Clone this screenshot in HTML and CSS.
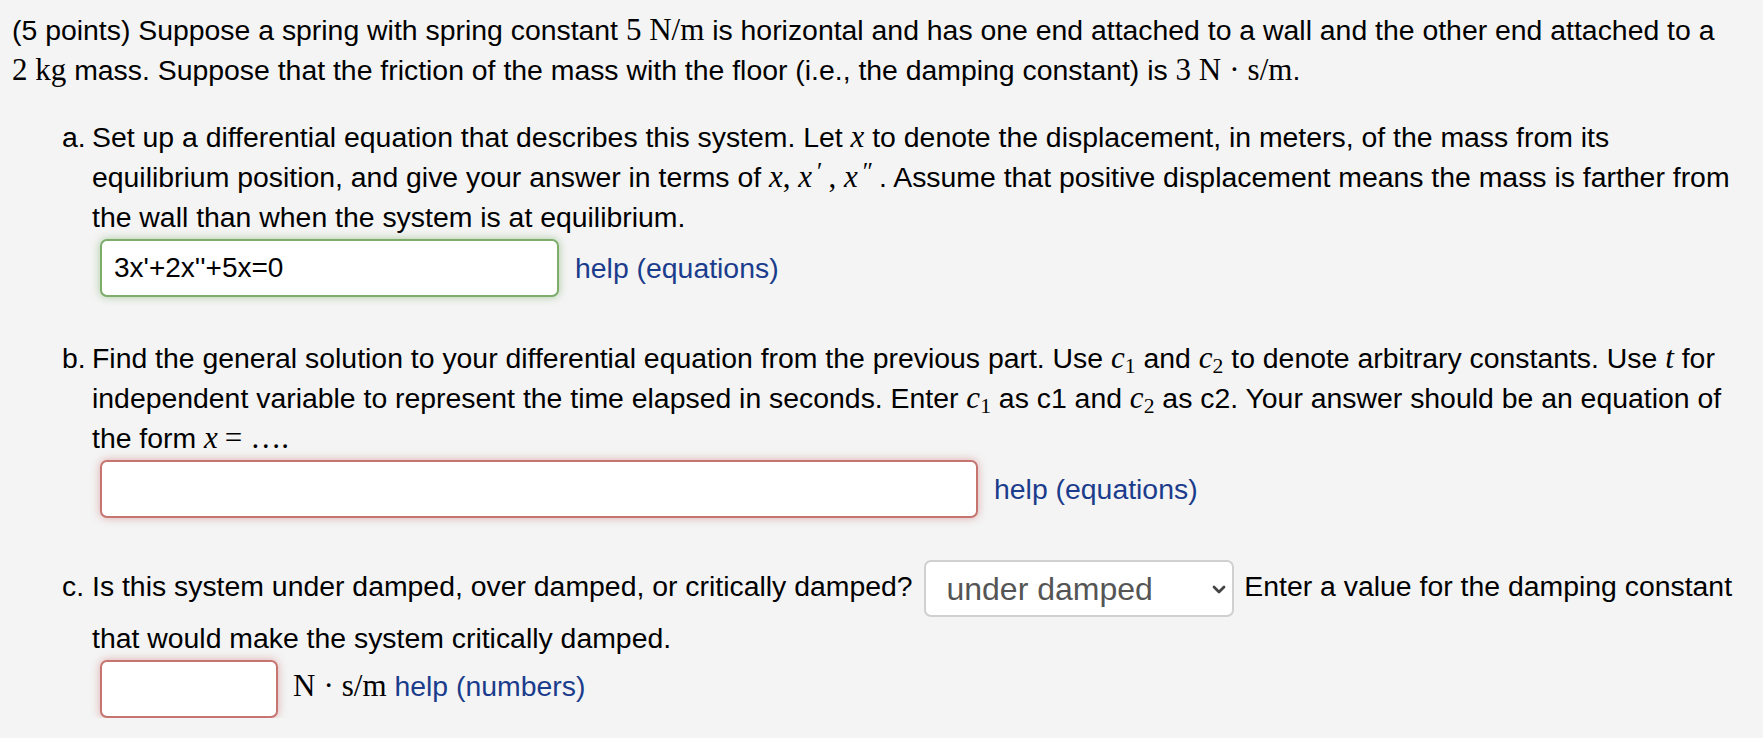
FILE: index.html
```html
<!DOCTYPE html>
<html>
<head>
<meta charset="utf-8">
<title>Spring problem</title>
<link rel="stylesheet" href="styles.css">
</head>
<body>
<div class="problem">
  <p class="intro">(5 points) Suppose a spring with spring constant <span class="m">5&nbsp;N/m</span> is horizontal and has one end attached to a wall and the other end attached to a <span class="m">2&nbsp;kg</span> mass. Suppose that the friction of the mass with the floor (i.e., the damping constant) is <span class="m">3&nbsp;N<span class="op">·</span>s/m</span>.</p>

  <div class="part part-first">
    <span class="label">a.</span>
    <div class="body">
      <p>Set up a differential equation that describes this system. Let <span class="m"><i>x</i></span> to denote the displacement, in meters, of the mass from its equilibrium position, and give your answer in terms of <span class="m"><i>x</i>, <i>x</i><span class="pr">′</span>, <i>x</i><span class="pr">″</span></span>. Assume that positive displacement means the mass is farther from the wall than when the system is at equilibrium.</p>
      <div class="answer">
        <input class="ans ok w-a" type="text" value="3x'+2x''+5x=0">
        <a class="help" href="#">help (equations)</a>
      </div>
    </div>
  </div>

  <div class="part">
    <span class="label">b.</span>
    <div class="body">
      <p>Find the general solution to your differential equation from the previous part. Use <span class="m"><i>c</i><sub>1</sub></span> and <span class="m"><i>c</i><sub>2</sub></span> to denote arbitrary constants. Use <span class="m"><i>t</i></span> for independent variable to represent the time elapsed in seconds. Enter <span class="m"><i>c</i><sub>1</sub></span> as c1 and <span class="m"><i>c</i><sub>2</sub></span> as c2. Your answer should be an equation of the form <span class="m"><i>x</i><span class="eq">=</span>….</span></p>
      <div class="answer">
        <input class="ans bad w-b" type="text" value="">
        <a class="help" href="#">help (equations)</a>
      </div>
    </div>
  </div>

  <div class="part">
    <span class="label">c.</span>
    <div class="body">
      <p>Is this system under damped, over damped, or critically damped? <span class="sel-wrap"><select class="sel"><option>under damped</option><option>over damped</option><option>critically damped</option></select><svg class="chev" viewBox="0 0 14 9" aria-hidden="true"><path d="M2 2 L7 7 L12 2" fill="none" stroke="#444" stroke-width="2.8" stroke-linecap="round" stroke-linejoin="round"/></svg></span> Enter a value for the damping constant that would make the system critically damped.</p>
      <div class="answer">
        <input class="ans bad w-c" type="text" value="">
        <span class="unit"><span class="m">N<span class="op">·</span>s/m</span> <a class="help-inline" href="#">help (numbers)</a></span>
      </div>
    </div>
  </div>
</div>
</body>
</html>
```

FILE: styles.css
```css
html, body {
  margin: 0;
}

body {
  background: #f4f4f4;
  color: #000;
  font-family: "Liberation Sans", Arial, Helvetica, sans-serif;
  font-size: 28.4px;
  line-height: 40px;
  padding: 10px 23px 0 12px;
}

p {
  margin: 0;
}

.m {
  font-family: "Liberation Serif", "Times New Roman", serif;
  font-size: 31px;
  line-height: 1;
}

.m i {
  font-style: italic;
}

.m sub {
  font-style: normal;
  font-size: 0.7em;
  line-height: 0;
  vertical-align: -0.25em;
}

.op {
  margin: 0 8px;
}

.pr {
  font-size: 0.8em;
  vertical-align: 0.3em;
  margin: 0 6px 0 5px;
}

.eq {
  margin: 0 8px 0 7px;
}

.part {
  display: flex;
  align-items: baseline;
  margin: 41px 0 0 50px;
}

.part-first {
  margin-top: 27px;
}

.label {
  flex: none;
  width: 30px;
}

.body {
  flex: 1;
  min-width: 0;
}

.answer {
  display: flex;
  align-items: center;
  margin: 2px 0 0 8px;
}

.ans {
  box-sizing: border-box;
  height: 58px;
  margin: 0;
  padding: 0 12px;
  border-radius: 7px;
  background: #fff;
  color: #000;
  font: 28px "Liberation Sans", Arial, sans-serif;
  outline: none;
}

.ok {
  border: 2px solid #7cad6b;
  box-shadow: 0 0 8px rgba(110, 165, 90, 0.55);
}

.bad {
  border: 2px solid #c67470;
  box-shadow: 0 0 8px rgba(200, 100, 100, 0.5);
}

.w-a {
  width: 459px;
}

.w-b {
  width: 878px;
}

.w-c {
  width: 178px;
}

.help,
.help-inline {
  color: #1b3c8c;
  text-decoration: none;
}

.help {
  margin-left: 16px;
}

.unit {
  margin: 0 0 7px 15px;
}

.sel-wrap {
  position: relative;
  display: inline-block;
  vertical-align: middle;
  margin: 1px 2px 1px 4px;
}

.sel {
  -webkit-appearance: none;
  appearance: none;
  display: block;
  box-sizing: border-box;
  width: 310px;
  height: 57px;
  margin: 0;
  padding: 0 0 0 20px;
  border: 2px solid #d0d0d0;
  border-radius: 7px;
  background: #fff;
  color: #555;
  font: 32px "Liberation Sans", Arial, sans-serif;
  outline: none;
}

.chev {
  position: absolute;
  right: 8px;
  top: 50%;
  width: 14px;
  height: 9px;
  margin-top: -4px;
  pointer-events: none;
}
```
